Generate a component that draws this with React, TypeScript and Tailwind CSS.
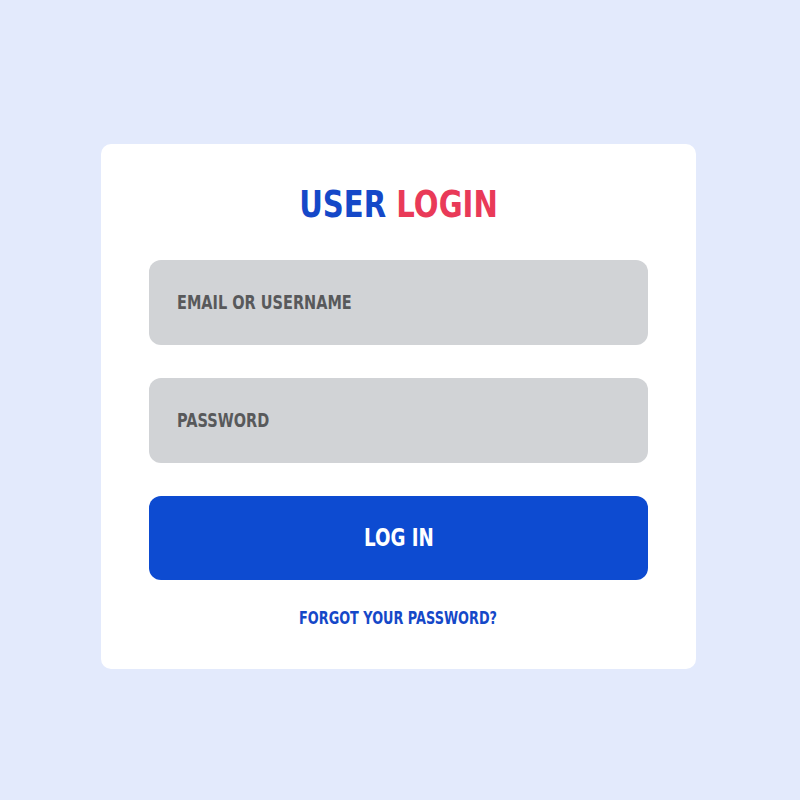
export default function App() {
  const font = { fontFamily: '"DejaVu Sans", "Liberation Sans", sans-serif' };
  return (
    <div className="min-h-screen w-full bg-[#e3eafc] flex items-start" style={font}>
      <div className="mt-[144px] ml-[101px] w-[595px] bg-white rounded-[10px] px-[48px] pt-[40px] pb-[40px] flex flex-col">
        <h1 className="h-[40px] leading-[40px] text-center text-[38px] font-bold">
          <span className="inline-block [transform:scaleX(0.767)] origin-center whitespace-pre">
            <span className="text-[#1548c8]">USER</span>{" "}
            <span className="text-[#e93a58]">LOGIN</span>
          </span>
        </h1>
        <div className="mt-[36px] h-[85px] rounded-[12px] bg-[#d1d3d6] flex items-center px-[28px]">
          <span className="inline-block [transform:scaleX(0.763)] origin-left text-[19px] font-bold text-[#58595b] leading-none whitespace-pre">
            EMAIL OR USERNAME
          </span>
        </div>
        <div className="mt-[33px] h-[85px] rounded-[12px] bg-[#d1d3d6] flex items-center px-[28px]">
          <span className="inline-block [transform:scaleX(0.763)] origin-left text-[19px] font-bold text-[#58595b] leading-none">
            PASSWORD
          </span>
        </div>
        <button className="mt-[33px] h-[84px] rounded-[12px] bg-[#0d4bd1] flex items-center justify-center">
          <span className="inline-block [transform:scaleX(0.76)] origin-center text-[24px] font-bold text-white leading-none whitespace-pre">
            LOG IN
          </span>
        </button>
        <div className="mt-[28px] h-[21px] leading-[21px] text-center text-[17px] font-bold text-[#1548c8]">
          <span className="inline-block [transform:scaleX(0.755)] origin-center whitespace-pre">FORGOT YOUR PASSWORD?</span>
        </div>
      </div>
    </div>
  );
}
